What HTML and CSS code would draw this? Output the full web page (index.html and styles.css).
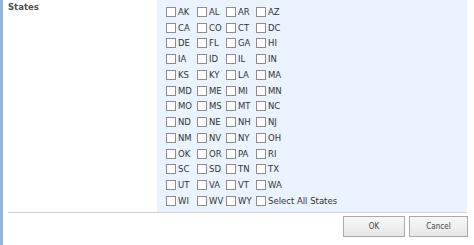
FILE: index.html
```html
<!DOCTYPE html>
<html>
<head>
<meta charset="utf-8">
<link rel="stylesheet" href="styles.css">
</head>
<body>
<div class="page">
  <div class="field">
    <div class="field-label">States</div>
    <div class="field-body">
      <div class="grid">
        <label class="item"><input type="checkbox"><span>AK</span></label>
        <label class="item"><input type="checkbox"><span>AL</span></label>
        <label class="item"><input type="checkbox"><span>AR</span></label>
        <label class="item"><input type="checkbox"><span>AZ</span></label>
        <label class="item"><input type="checkbox"><span>CA</span></label>
        <label class="item"><input type="checkbox"><span>CO</span></label>
        <label class="item"><input type="checkbox"><span>CT</span></label>
        <label class="item"><input type="checkbox"><span>DC</span></label>
        <label class="item"><input type="checkbox"><span>DE</span></label>
        <label class="item"><input type="checkbox"><span>FL</span></label>
        <label class="item"><input type="checkbox"><span>GA</span></label>
        <label class="item"><input type="checkbox"><span>HI</span></label>
        <label class="item"><input type="checkbox"><span>IA</span></label>
        <label class="item"><input type="checkbox"><span>ID</span></label>
        <label class="item"><input type="checkbox"><span>IL</span></label>
        <label class="item"><input type="checkbox"><span>IN</span></label>
        <label class="item"><input type="checkbox"><span>KS</span></label>
        <label class="item"><input type="checkbox"><span>KY</span></label>
        <label class="item"><input type="checkbox"><span>LA</span></label>
        <label class="item"><input type="checkbox"><span>MA</span></label>
        <label class="item"><input type="checkbox"><span>MD</span></label>
        <label class="item"><input type="checkbox"><span>ME</span></label>
        <label class="item"><input type="checkbox"><span>MI</span></label>
        <label class="item"><input type="checkbox"><span>MN</span></label>
        <label class="item"><input type="checkbox"><span>MO</span></label>
        <label class="item"><input type="checkbox"><span>MS</span></label>
        <label class="item"><input type="checkbox"><span>MT</span></label>
        <label class="item"><input type="checkbox"><span>NC</span></label>
        <label class="item"><input type="checkbox"><span>ND</span></label>
        <label class="item"><input type="checkbox"><span>NE</span></label>
        <label class="item"><input type="checkbox"><span>NH</span></label>
        <label class="item"><input type="checkbox"><span>NJ</span></label>
        <label class="item"><input type="checkbox"><span>NM</span></label>
        <label class="item"><input type="checkbox"><span>NV</span></label>
        <label class="item"><input type="checkbox"><span>NY</span></label>
        <label class="item"><input type="checkbox"><span>OH</span></label>
        <label class="item"><input type="checkbox"><span>OK</span></label>
        <label class="item"><input type="checkbox"><span>OR</span></label>
        <label class="item"><input type="checkbox"><span>PA</span></label>
        <label class="item"><input type="checkbox"><span>RI</span></label>
        <label class="item"><input type="checkbox"><span>SC</span></label>
        <label class="item"><input type="checkbox"><span>SD</span></label>
        <label class="item"><input type="checkbox"><span>TN</span></label>
        <label class="item"><input type="checkbox"><span>TX</span></label>
        <label class="item"><input type="checkbox"><span>UT</span></label>
        <label class="item"><input type="checkbox"><span>VA</span></label>
        <label class="item"><input type="checkbox"><span>VT</span></label>
        <label class="item"><input type="checkbox"><span>WA</span></label>
        <label class="item"><input type="checkbox"><span>WI</span></label>
        <label class="item"><input type="checkbox"><span>WV</span></label>
        <label class="item"><input type="checkbox"><span>WY</span></label>
        <label class="item"><input type="checkbox"><span>Select All States</span></label>
      </div>
    </div>
  </div>
  <div class="actions">
    <button class="btn btn-ok" type="button">OK</button>
    <button class="btn btn-cancel" type="button">Cancel</button>
  </div>
</div>
</body>
</html>
```

FILE: styles.css
```css
html, body {
  margin: 0;
  padding: 0;
  background: #ffffff;
}

body {
  font-family: "DejaVu Sans", Verdana, sans-serif;
  color: #333333;
}

.page {
  box-sizing: border-box;
  width: 474px;
  height: 245px;
  border-left: 3px solid #93b4e6;
  padding-left: 5px;
}

.field {
  display: flex;
  width: 459px;
  border-bottom: 1px solid #d3d3d3;
}

.field-label {
  width: 149px;
  padding-top: 2px;
  font-size: 8.5px;
  font-weight: bold;
  color: #4f4f4f;
  line-height: 10px;
}

.field-body {
  flex: 1;
  box-sizing: border-box;
  height: 212px;
  background: #ebf3fe;
  padding: 4px 0 0 9px;
}

.grid {
  display: grid;
  grid-template-columns: 31px 29px 30px auto;
  grid-auto-rows: 15.75px;
}

.item {
  display: flex;
  align-items: center;
  gap: 2px;
  font-size: 8.5px;
  color: #333333;
  white-space: nowrap;
}

.item input {
  -webkit-appearance: none;
  appearance: none;
  box-sizing: border-box;
  width: 10px;
  height: 10px;
  margin: 0;
  border: 1px solid #8d8d8d;
  background: #ffffff;
  flex: none;
}

.actions {
  display: flex;
  justify-content: flex-end;
  gap: 4px;
  padding-top: 3px;
  padding-right: 6px;
}

.btn {
  box-sizing: border-box;
  height: 21px;
  margin: 0;
  padding: 0;
  border: 1px solid #a9a9a9;
  border-radius: 0;
  background: linear-gradient(#f7f7f7, #e7e7e7);
  font-family: "DejaVu Sans Condensed", "DejaVu Sans", sans-serif;
  font-size: 8px;
  color: #444444;
}

.btn-ok {
  width: 62px;
}

.btn-cancel {
  width: 59px;
}
```
